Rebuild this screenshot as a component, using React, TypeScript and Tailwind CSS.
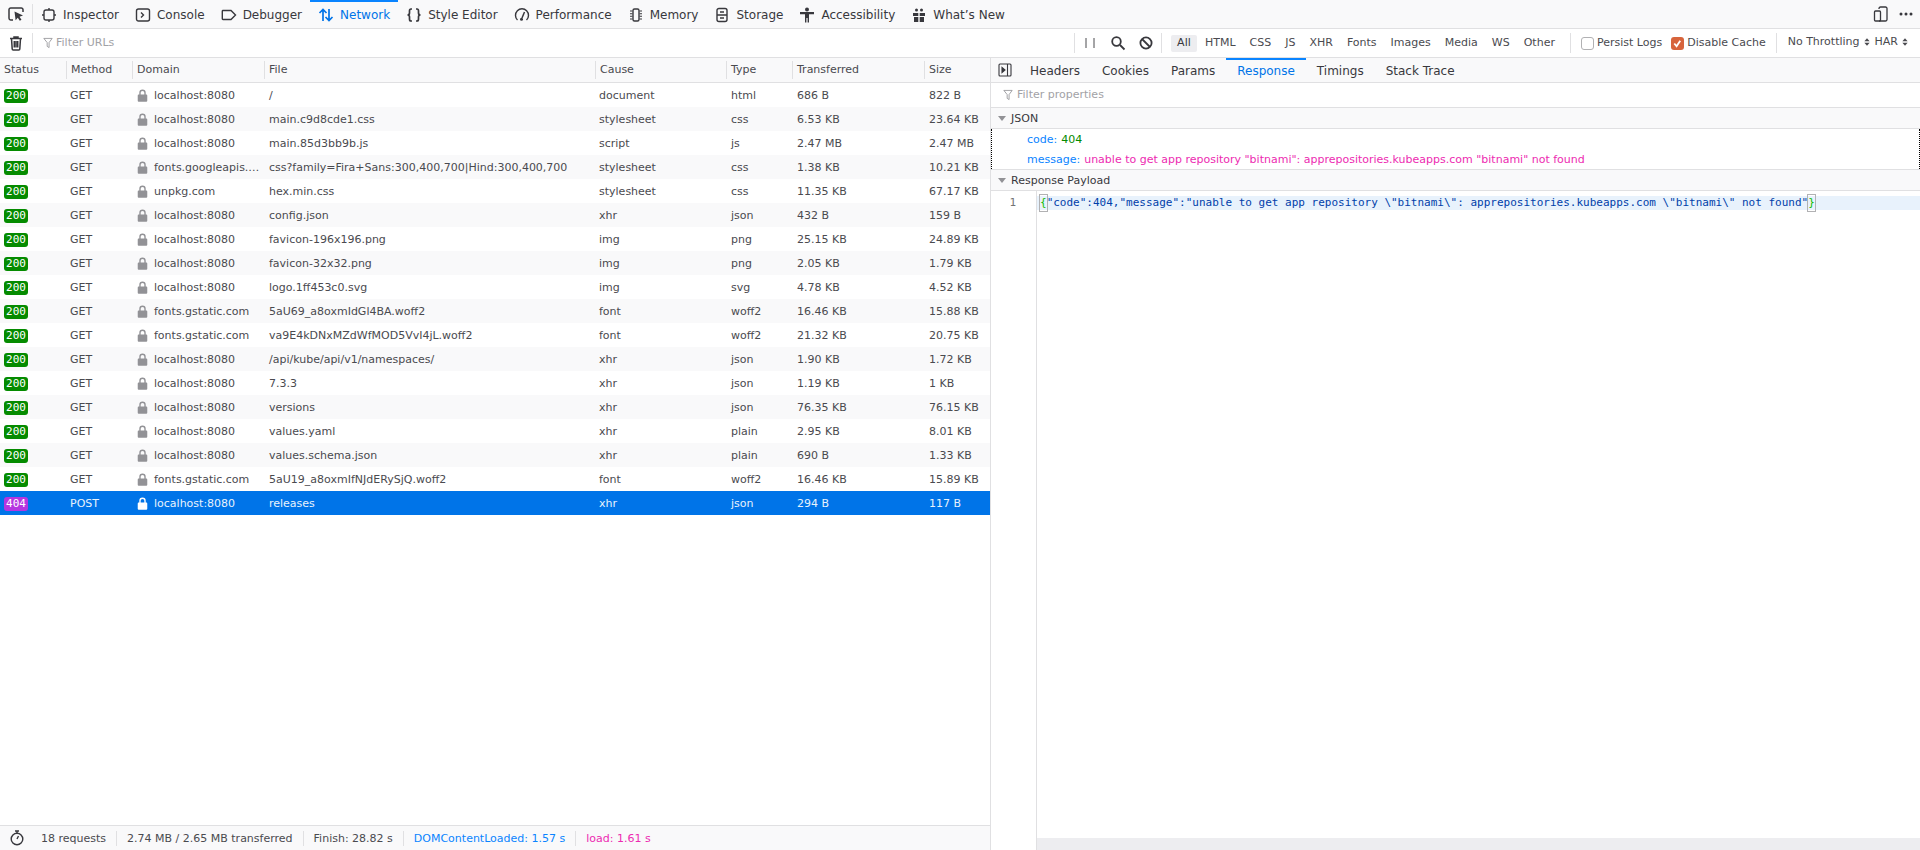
const rows: string[][] = [
  ["200","GET","localhost:8080","/","document","html","686 B","822 B"],
  ["200","GET","localhost:8080","main.c9d8cde1.css","stylesheet","css","6.53 KB","23.64 KB"],
  ["200","GET","localhost:8080","main.85d3bb9b.js","script","js","2.47 MB","2.47 MB"],
  ["200","GET","fonts.googleapis.…","css?family=Fira+Sans:300,400,700|Hind:300,400,700","stylesheet","css","1.38 KB","10.21 KB"],
  ["200","GET","unpkg.com","hex.min.css","stylesheet","css","11.35 KB","67.17 KB"],
  ["200","GET","localhost:8080","config.json","xhr","json","432 B","159 B"],
  ["200","GET","localhost:8080","favicon-196x196.png","img","png","25.15 KB","24.89 KB"],
  ["200","GET","localhost:8080","favicon-32x32.png","img","png","2.05 KB","1.79 KB"],
  ["200","GET","localhost:8080","logo.1ff453c0.svg","img","svg","4.78 KB","4.52 KB"],
  ["200","GET","fonts.gstatic.com","5aU69_a8oxmIdGl4BA.woff2","font","woff2","16.46 KB","15.88 KB"],
  ["200","GET","fonts.gstatic.com","va9E4kDNxMZdWfMOD5VvI4jL.woff2","font","woff2","21.32 KB","20.75 KB"],
  ["200","GET","localhost:8080","/api/kube/api/v1/namespaces/","xhr","json","1.90 KB","1.72 KB"],
  ["200","GET","localhost:8080","7.3.3","xhr","json","1.19 KB","1 KB"],
  ["200","GET","localhost:8080","versions","xhr","json","76.35 KB","76.15 KB"],
  ["200","GET","localhost:8080","values.yaml","xhr","plain","2.95 KB","8.01 KB"],
  ["200","GET","localhost:8080","values.schema.json","xhr","plain","690 B","1.33 KB"],
  ["200","GET","fonts.gstatic.com","5aU19_a8oxmIfNJdERySjQ.woff2","font","woff2","16.46 KB","15.89 KB"],
  ["404","POST","localhost:8080","releases","xhr","json","294 B","117 B"],
];

const Ico = ({ children, className = "" }: { children: React.ReactNode; className?: string }) => (
  <svg viewBox="0 0 16 16" width="16" height="16" fill="none" stroke="currentColor" strokeWidth="1.400" className={"shrink-0 " + className}>{children}</svg>
);

const tabs: [string, React.ReactNode][] = [
  ["Inspector", <><rect x="3" y="3" width="10" height="10" rx="2" /><path d="M8 1v2M8 13v2M1 8h2M13 8h2" /></>],
  ["Console", <><rect x="1.500" y="2" width="13" height="12" rx="2" /><path d="M6 5.500 8.500 8 6 10.500" /></>],
  ["Debugger", <path d="M2 3.500h8l4.500 4.500-4.500 4.500H2a.7.7 0 0 1-.7-.7V4.200a.7.7 0 0 1 .7-.7z" />],
  ["Network", <path d="M5 14V2.500M1.500 6 5 2.500 8.500 6M11 2v11.500M7.500 10l3.500 3.500 3.500-3.500" strokeWidth="1.700" />],
  ["Style Editor", <path d="M6 2H5C3.800 2 3.500 2.800 3.500 4v2c0 1-.5 2-2 2 1.500 0 2 1 2 2v2c0 1.200.3 2 1.500 2h1M10 2h1c1.200 0 1.500.8 1.500 2v2c0 1 .5 2 2 2-1.500 0-2 1-2 2v2c0 1.200-.3 2-1.500 2h-1" strokeWidth="1.700" />],
  ["Performance", <><path d="M3.500 13A6.500 6.500 0 1 1 12.500 13" /><path d="M10.500 5 8 11" strokeWidth="1.500" /><circle cx="7.500" cy="12.300" r="1.500" fill="currentColor" stroke="none" /></>],
  ["Memory", <><rect x="5" y="2" width="6" height="12" rx="1.500" /><path d="M2 4h2.500M2 6.700h2.500M2 9.300h2.500M2 12h2.500M11.500 4H14M11.500 6.700H14M11.500 9.300H14M11.500 12H14" strokeWidth="1.100" /></>],
  ["Storage", <><rect x="3" y="1.500" width="10" height="13" rx="2" /><path d="M3 8h10M6 5h4M6 11h4" /></>],
  ["Accessibility", <><circle cx="8" cy="2.500" r="2" fill="currentColor" stroke="none" /><path d="M1 5h14v2.200H10v8.300H8.600v-4.500H7.400v4.500H6V7.200H1z" fill="currentColor" stroke="none" /></>],
  ["What’s New", <><path d="M2 6h5.300v3H2zM8.700 6H14v3H8.700zM3 10h4.300v5H3zM8.700 10H13v5H8.700z" fill="currentColor" stroke="none" /><circle cx="5.500" cy="3" r="1.500" fill="currentColor" stroke="none" /><circle cx="10.500" cy="3" r="1.500" fill="currentColor" stroke="none" /></>],
];

const Lock = ({ white }: { white?: boolean }) => (
  <svg viewBox="0 0 12 14" width="11" height="13" className="shrink-0" fill={white ? "#fff" : "#929296"}>
    <path d="M2.500 6V4a3.500 3.500 0 0 1 7 0v2h.7c.6 0 1 .4 1 1v5.800c0 .6-.4 1-1 1H1.800c-.6 0-1-.4-1-1V7c0-.6.4-1 1-1zM4 6h4V4a2 2 0 0 0-4 0z" fillRule="evenodd" />
  </svg>
);

const Funnel = () => (
  <svg viewBox="0 0 12 14" width="10" height="12" fill="none" stroke="#929296" strokeWidth="1" className="shrink-0">
    <path d="M1 1.500h10L7.300 6.500V12.500L5 11V6.500z" />
  </svg>
);

const Updown = () => (
  <svg viewBox="0 0 8 12" width="6" height="10" fill="#4a4a4f" className="shrink-0"><path d="M4 1l3.500 4H.5zM4 11 .5 7h7z" /></svg>
);

const Tri = () => (
  <svg viewBox="0 0 10 10" width="10" height="10" fill="#929296" className="ml-[6px] mr-[4px] shrink-0"><path d="M1 3h8L5 8z" /></svg>
);

const Sep = () => <div className="h-[20px] w-px bg-[#e0e0e2] shrink-0" />;
const StatusSep = () => <div className="w-px h-[15px] bg-[#e0e0e2] mx-[10px]" />;

const cols = ["w-[67px]", "w-[66px]", "w-[132px]", "w-[331px]", "w-[131px]", "w-[66px]", "w-[132px]", "w-[65px]"];
const heads = ["Status", "Method", "Domain", "File", "Cause", "Type", "Transferred", "Size"];

export default function App() {
  return (
    <div className="h-[850px] w-[1920px] overflow-hidden flex flex-col bg-white text-[11px] text-[#4a4a4f] font-['DejaVu_Sans',sans-serif]">
      <div className="h-[29px] shrink-0 bg-[#f9f9fa] border-b border-[#e0e0e2] flex items-stretch">
        <div className="w-[32px] shrink-0 flex items-center justify-center text-[#38383d]">
          <svg viewBox="0 0 16 16" width="16" height="16" fill="none" stroke="currentColor" strokeWidth="1.500">
            <path d="M5 14H2.700A1.700 1.700 0 0 1 1 12.300V3.700A1.700 1.700 0 0 1 2.700 2h10.600A1.700 1.700 0 0 1 15 3.700V6" />
            <path d="M6.500 5.500l8.500 4-3.500 1.200 2 3-1.700 1.100-2-3-2.200 2.400z" fill="currentColor" stroke="none" />
          </svg>
        </div>
        <div className="w-px h-[20px] self-center bg-[#e0e0e2] shrink-0" />
        {tabs.map(([label, icon]) => {
          const active = label === "Network";
          return (
            <div key={label} className={"relative flex items-center gap-[6px] px-[8px] pt-[2px] text-[12px] " + (active ? "text-[#0074e8]" : "text-[#38383d]")}>
              {active && <div className="absolute left-0 right-0 top-0 h-[2px] bg-[#0a84ff]" />}
              <Ico>{icon}</Ico>
              <span>{label}</span>
            </div>
          );
        })}
        <div className="flex-1" />
        <div className="flex items-center pr-[6px] gap-[9px] text-[#38383d]">
          <svg viewBox="0 0 16 16" width="16" height="16" fill="none" stroke="currentColor" strokeWidth="1.300">
            <path d="M6 3V2.500A1.500 1.500 0 0 1 7.500 1h5A1.500 1.500 0 0 1 14 2.500v11a1.500 1.500 0 0 1-1.500 1.500H6" />
            <rect x="1.500" y="5" width="6" height="10" rx="1" />
          </svg>
          <svg viewBox="0 0 16 16" width="16" height="16" fill="currentColor"><circle cx="3" cy="8" r="1.500" /><circle cx="8" cy="8" r="1.500" /><circle cx="13" cy="8" r="1.500" /></svg>
        </div>
      </div>

      <div className="h-[29px] shrink-0 bg-white border-b border-[#e0e0e2] flex items-center pr-[12px]">
        <div className="w-[32px] flex justify-center shrink-0 text-[#38383d]">
          <svg viewBox="0 0 16 16" width="16" height="16" fill="none" stroke="currentColor" strokeWidth="1.500">
            <path d="M2 3.500h12M6 3.500V2h4v1.500M3.500 3.500l.7 10.500a1 1 0 0 0 1 1h5.600a1 1 0 0 0 1-1l.7-10.500M6.300 6v6.500M8 6v6.500M9.700 6v6.500" />
          </svg>
        </div>
        <Sep />
        <div className="flex items-center ml-[10px] gap-[3px] text-[#a2a2a6] flex-1">
          <Funnel />
          <span>Filter URLs</span>
        </div>
        <Sep />
        <div className="w-[30px] flex justify-center text-[#4a4a4f]">
          <svg viewBox="0 0 16 16" width="16" height="16" fill="none" stroke="currentColor" strokeWidth="1"><path d="M4 3v10M12 3v10" /></svg>
        </div>
        <div className="w-[27px] flex justify-center text-[#38383d]">
          <svg viewBox="0 0 16 16" width="16" height="16" fill="none" stroke="currentColor" strokeWidth="1.800"><circle cx="6.500" cy="6.500" r="4.300" /><path d="m10 10 4.500 4.500" /></svg>
        </div>
        <div className="w-[29px] flex justify-center text-[#38383d]">
          <svg viewBox="0 0 16 16" width="16" height="16" fill="none" stroke="currentColor" strokeWidth="1.800"><circle cx="8" cy="8" r="5.600" /><path d="m4 4 8 8" /></svg>
        </div>
        <Sep />
        <div className="flex items-center ml-[9px] gap-[14px]">
          <span className="bg-[#ededf0] rounded-[2px] h-[17px] w-[26px] flex items-center justify-center text-[#38383d]">All</span>
          <div className="-ml-[6px] flex gap-[14px]">
            {["HTML", "CSS", "JS", "XHR", "Fonts", "Images", "Media", "WS", "Other"].map((t) => <span key={t}>{t}</span>)}
          </div>
        </div>
        <div className="ml-[15px]"><Sep /></div>
        <div className="flex items-center ml-[10px] gap-[3px]">
          <span className="w-[13px] h-[13px] rounded-[3px] border border-[#b1b1b3] bg-white shrink-0" />
          <span>Persist Logs</span>
        </div>
        <div className="flex items-center ml-[9px] gap-[3px]">
          <span className="w-[13px] h-[13px] rounded-[3px] bg-[#d7643c] shrink-0 flex items-center justify-center">
            <svg viewBox="0 0 12 12" width="11" height="11" fill="none" stroke="#fff" strokeWidth="2"><path d="m2.500 6 2.500 3 4-6" /></svg>
          </span>
          <span>Disable Cache</span>
        </div>
        <div className="ml-[10px]"><Sep /></div>
        <div className="flex items-center ml-[11px] gap-[4px] -mt-[2px]">
          <span>No Throttling</span><Updown />
          <span className="ml-[1px]">HAR</span><Updown />
        </div>
      </div>

      <div className="flex-1 flex min-h-0">
        <div className="w-[991px] shrink-0 flex flex-col border-r border-[#e0e0e2]">
          <div className="h-[25px] shrink-0 flex items-stretch bg-[#f9f9fa] border-b border-[#e0e0e2]">
            {heads.map((h, i) => (
              <div key={h} className={cols[i] + " flex items-center pl-[4px] pt-[1px] " + (i < 7 ? "relative" : "")}>
                {h}
                {i < 7 && <div className="absolute right-0 top-[3px] bottom-[3px] w-px bg-[#e0e0e2]" />}
              </div>
            ))}
          </div>
          <div className="flex-1 min-h-0">
            {rows.map((r, i) => {
              const sel = i === 17;
              return (
                <div key={i} className={"h-[24px] flex items-center " + (sel ? "bg-[#0074e8] text-[#e8f2fc]" : i % 2 ? "bg-[#f9f9fa]" : "bg-white")}>
                  <div className={cols[0] + " pl-[4px] pt-[2px]"}>
                    <span className={"block w-[24px] h-[14px] rounded-[3px] text-center text-white leading-[14px] font-['DejaVu_Sans_Mono',monospace] " + (r[0] === "404" ? "bg-[#b535e0]" : "bg-[#058b00]")}>{r[0]}</span>
                  </div>
                  <div className={cols[1] + " pl-[3px] pt-[2px]"}>{r[1]}</div>
                  <div className={cols[2] + " pl-[4px] pr-[3px] flex items-center gap-[6px]"}>
                    <Lock white={sel} />
                    <span className="whitespace-nowrap pt-[2px]">{r[2]}</span>
                  </div>
                  <div className={cols[3] + " pl-[4px] pr-[3px] pt-[2px] whitespace-nowrap"}>{r[3]}</div>
                  <div className={cols[4] + " pl-[3px] pt-[2px]"}>{r[4]}</div>
                  <div className={cols[5] + " pl-[4px] pt-[2px]"}>{r[5]}</div>
                  <div className={cols[6] + " pl-[4px] pt-[2px]"}>{r[6]}</div>
                  <div className={cols[7] + " pl-[4px] pt-[2px]"}>{r[7]}</div>
                </div>
              );
            })}
          </div>
          <div className="h-[25px] shrink-0 border-t border-[#e0e0e2] bg-[#f9f9fa] flex items-center">
            <div className="w-[33px] flex justify-center text-[#38383d] shrink-0">
              <svg viewBox="0 0 16 16" width="16" height="16" fill="none" stroke="currentColor" strokeWidth="1.400"><circle cx="8" cy="9" r="5.800" /><path d="M8 9l1.500-3M6 1h4M8 1v2.500" /></svg>
            </div>
            <span className="ml-[8px] pt-[2px]">18 requests</span>
            <StatusSep />
            <span className="pt-[2px]">2.74 MB / 2.65 MB transferred</span>
            <StatusSep />
            <span className="pt-[2px]">Finish: 28.82 s</span>
            <StatusSep />
            <span className="text-[#0a84ff] pt-[2px]">DOMContentLoaded: 1.57 s</span>
            <StatusSep />
            <span className="text-[#ed2bb1] pt-[2px]">load: 1.61 s</span>
          </div>
        </div>

        <div className="flex-1 flex flex-col min-w-0">
          <div className="h-[25px] shrink-0 flex items-stretch bg-[#f9f9fa] border-b border-[#e0e0e2] text-[12px] text-[#38383d]">
            <div className="w-[28px] flex items-center justify-center shrink-0">
              <svg viewBox="0 0 16 16" width="16" height="16" fill="none" stroke="currentColor" strokeWidth="1.100"><rect x="2" y="2" width="12" height="12" rx="1" /><path d="M10.500 2v12" /><path d="M5 5.500 8 8l-3 2.500z" fill="currentColor" /></svg>
            </div>
            {["Headers", "Cookies", "Params", "Response", "Timings", "Stack Trace"].map((t) => (
              <div key={t} className={"relative flex items-center px-[11px] pt-[2px] " + (t === "Response" ? "text-[#0074e8]" : "")}>
                {t === "Response" && <div className="absolute left-0 right-0 top-0 h-[2px] bg-[#0a84ff]" />}
                {t}
              </div>
            ))}
          </div>
          <div className="h-[25px] shrink-0 border-b border-[#e0e0e2] flex items-center pl-[12px] gap-[4px] text-[#a2a2a6]">
            <Funnel />
            <span className="pt-[1px]">Filter properties</span>
          </div>
          <div className="h-[21px] shrink-0 bg-[#f9f9fa] border-b border-[#e0e0e2] flex items-center text-[#38383d]">
            <Tri />
            <span className="pt-[2px]">JSON</span>
          </div>
          <div className="h-[40px] shrink-0 border-x border-dotted border-black">
            <div className="h-[20px] flex items-center pl-[35px] gap-[4px] pt-[2px]">
              <span className="text-[#0a84ff]">code:</span><span className="text-[#058b00]">404</span>
            </div>
            <div className="h-[20px] flex items-center pl-[35px] gap-[4px] pt-[2px]">
              <span className="text-[#0a84ff]">message:</span>
              <span className="text-[#ed2bb1]">unable to get app repository "bitnami": apprepositories.kubeapps.com "bitnami" not found</span>
            </div>
          </div>
          <div className="h-[22px] shrink-0 bg-[#f9f9fa] border-y border-[#e0e0e2] flex items-center text-[#38383d]">
            <Tri />
            <span className="pt-[2px]">Response Payload</span>
          </div>
          <div className="flex-1 flex min-h-0">
            <div className="w-[46px] shrink-0 border-r border-[#e0e0e2] text-right pr-[20px] pt-[5px] leading-[13px] text-[#737373] font-['DejaVu_Sans_Mono',monospace]">1</div>
            <div className="flex-1 flex flex-col min-w-0">
              <div className="flex-1 pt-[5px]">
                <div className="h-[14px] bg-[#e8f2fc] flex items-center font-['DejaVu_Sans_Mono',monospace] text-[#003eaa] whitespace-pre pl-[3px]">
                  <span className="text-[#12bc00] outline outline-[#b1b1b3]">{"{"}</span>
                  <span>{'"code":404,"message":"unable to get app repository \\"bitnami\\": apprepositories.kubeapps.com \\"bitnami\\" not found"'}</span>
                  <span className="text-[#12bc00] outline outline-[#b1b1b3]">{"}"}</span>
                </div>
              </div>
              <div className="h-[12px] shrink-0 bg-[#ededf0]" />
            </div>
          </div>
        </div>
      </div>
    </div>
  );
}
